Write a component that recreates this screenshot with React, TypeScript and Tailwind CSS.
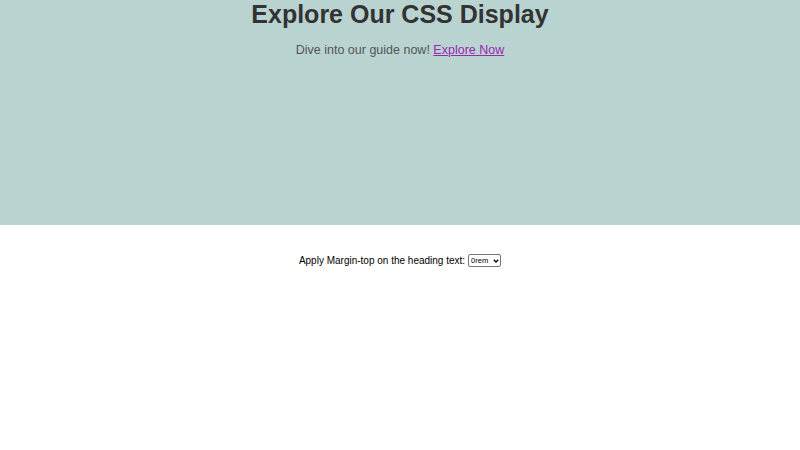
import { useState } from "react";

export default function App() {
  const [margin, setMargin] = useState("0rem");

  return (
    <div className="min-h-screen bg-white font-['Liberation_Sans',Arial,sans-serif]">
      <header className="h-[225px] bg-[#b8d3d0] text-center">
        <h1 className="text-[25px] leading-[28px] font-bold text-[#333333]" style={{ marginTop: margin }}>
          Explore Our CSS Display
        </h1>
        <p className="mt-[13px] text-[12.5px] leading-[18px] text-[#555555]">
          Dive into our guide now!{" "}
          <a href="#" className="text-[#9c27b0] underline">
            Explore Now
          </a>
        </p>
      </header>
      <div className="flex items-center justify-center gap-[3px] pt-[28px] text-[10px] text-black">
        <label htmlFor="mt">Apply Margin-top on the heading text:</label>
        <div className="relative inline-flex">
          <select
            id="mt"
            value={margin}
            onChange={(e) => setMargin(e.target.value)}
            className="h-[13px] w-[33px] appearance-none rounded-[2px] border border-[#767676] bg-white pl-[2px] pr-[9px] text-[7.5px] leading-none text-black"
          >
            <option value="0rem">0rem</option>
            <option value="1rem">1rem</option>
            <option value="2rem">2rem</option>
            <option value="3rem">3rem</option>
          </select>
          <svg
            className="pointer-events-none absolute right-[2px] top-[4.5px]"
            width="6"
            height="4"
            viewBox="0 0 6 4"
          >
            <path d="M0.8 0.8l2.2 2.2l2.2-2.2" fill="none" stroke="#000" strokeWidth="1.3" />
          </svg>
        </div>
      </div>
    </div>
  );
}
